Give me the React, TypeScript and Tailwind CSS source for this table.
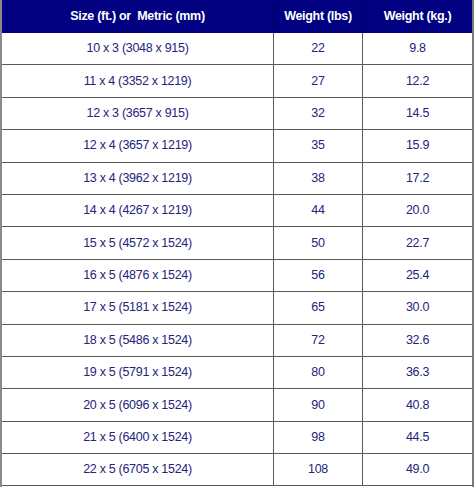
import React from 'react';

interface Row {
  size: string;
  lbs: string;
  kg: string;
}

const rows: Row[] = [
  { size: '10 x 3 (3048 x 915)', lbs: '22', kg: '9.8' },
  { size: '11 x 4 (3352 x 1219)', lbs: '27', kg: '12.2' },
  { size: '12 x 3 (3657 x 915)', lbs: '32', kg: '14.5' },
  { size: '12 x 4 (3657 x 1219)', lbs: '35', kg: '15.9' },
  { size: '13 x 4 (3962 x 1219)', lbs: '38', kg: '17.2' },
  { size: '14 x 4 (4267 x 1219)', lbs: '44', kg: '20.0' },
  { size: '15 x 5 (4572 x 1524)', lbs: '50', kg: '22.7' },
  { size: '16 x 5 (4876 x 1524)', lbs: '56', kg: '25.4' },
  { size: '17 x 5 (5181 x 1524)', lbs: '65', kg: '30.0' },
  { size: '18 x 5 (5486 x 1524)', lbs: '72', kg: '32.6' },
  { size: '19 x 5 (5791 x 1524)', lbs: '80', kg: '36.3' },
  { size: '20 x 5 (6096 x 1524)', lbs: '90', kg: '40.8' },
  { size: '21 x 5 (6400 x 1524)', lbs: '98', kg: '44.5' },
  { size: '22 x 5 (6705 x 1524)', lbs: '108', kg: '49.0' },
];

const cell = 'flex items-center justify-center border-b border-[#5a5a5a] tracking-[-0.3px]';

export default function App() {
  return (
    <div
      className="w-[474px] h-[487px] bg-white border-l-2 border-r-2 border-l-[#8a8a8a] border-r-[#7a7a7a] overflow-hidden"
      style={{ fontFamily: '"Liberation Sans", Arial, sans-serif' }}
    >
      <div className="grid grid-cols-[271px_89px_110px] grid-rows-[33px_repeat(14,32.4px)]">
        {/* header */}
        <div className={`${cell} bg-[#000080] text-white font-bold text-[12.5px] border-b-0`}>
          Size (ft.) or&nbsp; Metric (mm)
        </div>
        <div className={`${cell} bg-[#000080] text-white font-bold text-[12.5px] border-b-0 border-l border-l-[#000060]`}>
          Weight (lbs)
        </div>
        <div className={`${cell} bg-[#000080] text-white font-bold text-[12.5px] border-b-0 border-l border-l-[#000060]`}>
          Weight (kg.)
        </div>

        {rows.map((r) => (
          <React.Fragment key={r.size}>
            <div className={`${cell} text-[12.5px] text-[#24247c]`}>{r.size}</div>
            <div className={`${cell} text-[12.5px] text-[#24247c] border-l border-l-[#5a5a5a]`}>{r.lbs}</div>
            <div className={`${cell} text-[12.5px] text-[#24247c] border-l border-l-[#5a5a5a]`}>{r.kg}</div>
          </React.Fragment>
        ))}
      </div>
    </div>
  );
}
